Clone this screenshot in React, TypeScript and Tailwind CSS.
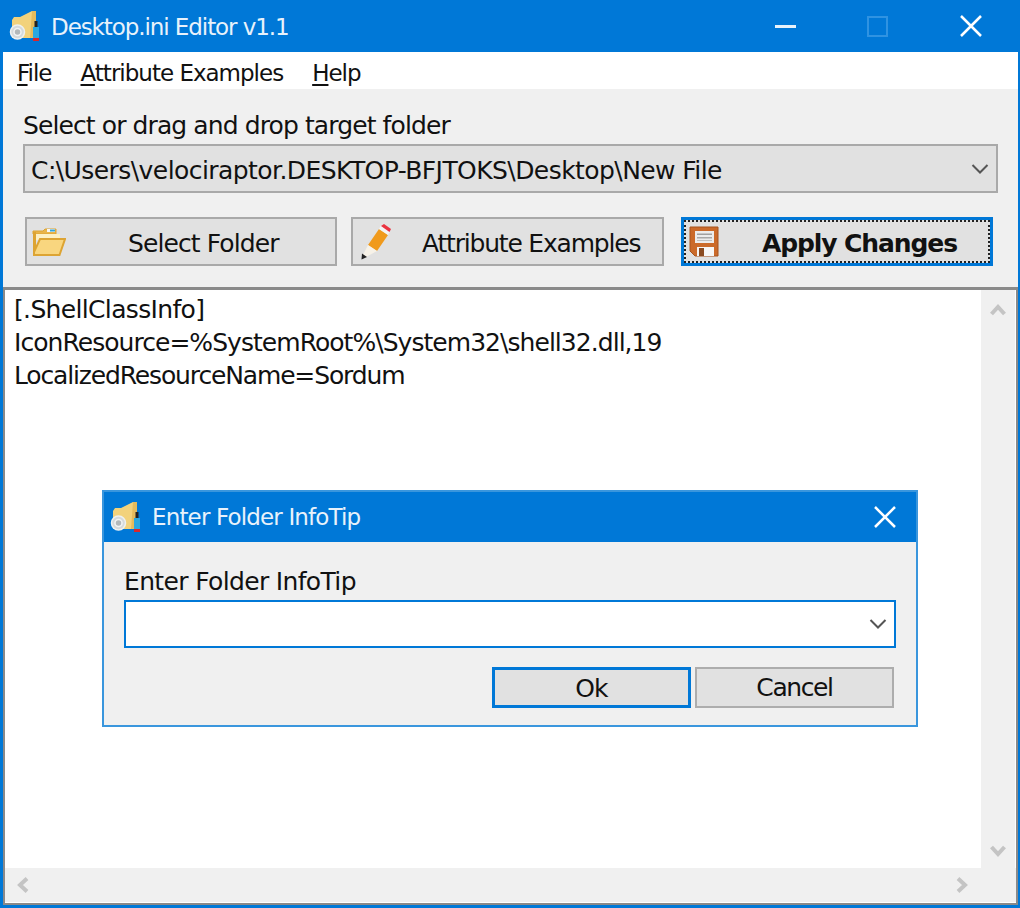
const font = "[font-family:'DejaVu_Sans',sans-serif]";

function AppIcon() {
  return (
    <svg width="30" height="32" viewBox="0 0 30 32">
      <path d="M3 10 L5 7 L11 7 L23 1 L27 1 L27 27 L23 28 L3 28 Z" fill="#f2d27c" />
      <path d="M23 1 L27 1 L27 27 L21 28 Z" fill="#e4bb5c" />
      <circle cx="8.500" cy="22" r="7" fill="#d5dadc" stroke="#eef1f1" strokeWidth="1.500" />
      <circle cx="8.500" cy="22" r="3.500" fill="#b3b8ba" stroke="#f2f3f3" strokeWidth="1.500" />
      <rect x="24" y="17" width="6" height="11" fill="#2aa8e0" />
      <rect x="25.500" y="11" width="3" height="6" fill="#222" />
      <rect x="24" y="28" width="6" height="3" fill="#d8262c" />
    </svg>
  );
}

function FolderIcon() {
  return (
    <svg width="34" height="28" viewBox="0 0 34 28">
      <path d="M1 3 H11 L13 1 H24 V6 H1 Z" fill="#e9b44a" stroke="#dda433" />
      <rect x="15" y="1" width="8" height="3" fill="#f5f5f5" />
      <rect x="18" y="1.500" width="5" height="2" fill="#35a7dc" />
      <path d="M1 4 H4 V27 H1 Z" fill="#dda433" />
      <path d="M4 6 H28 V12 H4 Z" fill="#fdf0c4" />
      <path d="M8 11 H33 L27.500 27 H2 V24 Z" fill="#f9d67f" stroke="#dda433" strokeWidth="2" />
    </svg>
  );
}

function PencilIcon() {
  return (
    <svg width="32" height="36" viewBox="0 0 32 36">
      <path d="M8 21 L19 5 L28 11 L17 27 Z" fill="#f09a1c" />
      <path d="M19 5 L21 1.500 L30 7.500 L28 11 Z" fill="#f4f4f4" />
      <path d="M21 2 L24 0 L31 5 L29.500 8 Z" fill="#ea3340" />
      <path d="M8 21 L17 27 L6 33 L3 31 Z" fill="#f7f2e8" />
      <path d="M2 29.500 L7 33 L1.500 35.500 Z" fill="#222" />
    </svg>
  );
}

function SaveIcon() {
  return (
    <svg width="30" height="31" viewBox="0 0 30 31">
      <path d="M1 1 H29 V30 H6 L1 25 Z" fill="#cb6a2a" stroke="#a5531f" />
      <rect x="6" y="5" width="19" height="12" fill="#ececec" />
      <rect x="8" y="7.500" width="15" height="1.500" fill="#a0a0a0" />
      <rect x="8" y="11" width="15" height="1.500" fill="#a8a8a8" />
      <rect x="8" y="14" width="15" height="1" fill="#c0c0c0" />
      <rect x="8" y="21" width="17" height="9" fill="#f6f6f6" />
      <rect x="10" y="22" width="5" height="8" fill="#8a4a20" />
    </svg>
  );
}

function CloseGlyph({ size }: { size: number }) {
  return (
    <svg width={size} height={size} viewBox="0 0 22 22" stroke="#fff" strokeWidth="2.500" fill="none">
      <path d="M1 1 L21 21 M21 1 L1 21" />
    </svg>
  );
}

function ComboChevron() {
  return (
    <svg width="18" height="12" viewBox="0 0 18 12" fill="none" stroke="#555" strokeWidth="2">
      <path d="M1.500 2 L9 9.500 L16.500 2" />
    </svg>
  );
}

function ScrollChevron({ rotate }: { rotate: string }) {
  return (
    <svg width="16" height="14" viewBox="0 0 16 14" fill="none" stroke="#c4c4c4" strokeWidth="4" className={rotate}>
      <path d="M1.500 11 L8 4 L14.500 11" />
    </svg>
  );
}

function Mnemonic({ first, rest }: { first: string; rest: string }) {
  return (
    <span>
      <span className="underline underline-offset-[3px] decoration-2">{first}</span>
      {rest}
    </span>
  );
}

function ToolButton({ icon, label, className, iconClass, labelClass }: { icon: React.ReactNode; label: string; className: string; iconClass: string; labelClass: string }) {
  return (
    <button className={`h-[49px] flex items-center bg-[#e1e1e1] text-[25px] text-[#111] ${className}`}>
      <span className={`flex items-center ${iconClass}`}>{icon}</span>
      <span className={`pt-[4px] ${labelClass}`}>{label}</span>
    </button>
  );
}

export default function App() {
  return (
    <div className={`relative w-[1020px] h-[908px] flex flex-col overflow-hidden bg-[#0078d7] tracking-[-0.9px] ${font}`}>
      {/* Title bar */}
      <div className="h-[52px] shrink-0 flex items-center text-white">
        <div className="ml-[9px] w-[30px] flex"><AppIcon /></div>
        <span className="ml-[12px] pt-[2px] text-[23px] tracking-[-1.08px] text-[#e8f2fb]">Desktop.ini Editor v1.1</span>
        <div className="ml-auto flex items-center">
          <div className="w-[21px] h-[3px] bg-[#e8f2fb] mr-[71px]" />
          <div className="w-[21px] h-[21px] border-2 border-[#2f93e2] mr-[72px]" />
          <div className="mr-[38px] flex"><CloseGlyph size={22} /></div>
        </div>
      </div>

      <div className="flex-1 min-h-0 ml-[3px] mr-[2px] mb-[3px] flex flex-col">
        {/* Menu */}
        <div className="h-[37px] shrink-0 bg-white flex items-center text-[23px] tracking-[-1px] text-[#111] pl-[14px] pt-[5px] gap-[29px]">
          <Mnemonic first="F" rest="ile" />
          <Mnemonic first="A" rest="ttribute Examples" />
          <Mnemonic first="H" rest="elp" />
        </div>

        {/* Folder panel */}
        <div className="h-[198px] shrink-0 bg-[#f0f0f0] flex flex-col pl-[20px] pr-[20px]">
          <div className="mt-[21px] h-[32px] text-[25px] leading-[32px] text-[#111]">Select or drag and drop target folder</div>
          <div className="mt-[2px] h-[49px] flex items-center justify-between bg-[#e1e1e1] border-[2px] border-[#a9a9a9] pl-[6px] pr-[7px] text-[25px] text-[#111]">
            <span className="pt-[4px] tracking-[-0.57px]">C:\Users\velociraptor.DESKTOP-BFJTOKS\Desktop\New File</span>
            <ComboChevron />
          </div>
          <div className="mt-[24px] flex">
            <ToolButton
              icon={<FolderIcon />}
              label="Select Folder"
              className="ml-[2px] w-[312px] border-[2px] border-[#a9a9a9]"
              iconClass="ml-[5px] w-[96px]"
              labelClass=""
            />
            <ToolButton
              icon={<PencilIcon />}
              label="Attribute Examples"
              className="ml-[14px] w-[313px] border-[2px] border-[#a9a9a9]"
              iconClass="ml-[7px] w-[62px]"
              labelClass="tracking-[-1.2px]"
            />
            <button className="ml-[17px] w-[312px] h-[49px] border-[3px] border-[#0078d7] bg-[#e1e1e1]">
              <span className="h-full flex items-center border-2 border-dotted border-[#222] text-[25px] font-bold text-[#111] tracking-[-1.1px]">
                <span className="ml-[3px] w-[73px] flex items-center"><SaveIcon /></span>
                <span className="pt-[4px]">Apply Changes</span>
              </span>
            </button>
          </div>
        </div>

        {/* Editor */}
        <div className="flex-1 min-h-0 flex flex-col bg-white border-t-[3px] border-x-[2px] border-b-[2px] border-t-[#8a8a8a] border-x-[#8a8a8a] border-b-[#8a8a8a]">
          <div className="flex-1 min-h-0 flex">
            <div className="flex-1 pl-[9px] pt-[3px] text-[25px] leading-[33px] text-[#111]">
              <div className="tracking-[-0.66px]">[.ShellClassInfo]</div>
              <div className="tracking-[-0.96px]">IconResource=%SystemRoot%\System32\shell32.dll,19</div>
              <div className="tracking-[-1.15px]">LocalizedResourceName=Sordum</div>
            </div>
            <div className="w-[34px] mr-[1px] bg-[#f0f0f0] flex flex-col items-center justify-between pt-[13px] pb-[10px]">
              <ScrollChevron rotate="" />
              <ScrollChevron rotate="rotate-180" />
            </div>
          </div>
          <div className="h-[34px] mb-[1px] shrink-0 flex items-center justify-between bg-[#f0f0f0] pl-[10px] pr-[46px]">
            <ScrollChevron rotate="-rotate-90" />
            <ScrollChevron rotate="rotate-90" />
          </div>
        </div>
      </div>

      {/* InfoTip dialog */}
      <div className="absolute left-[102px] top-[490px] w-[816px] h-[237px] flex flex-col border-2 border-t-0 border-[#3a96dd] bg-[#f0f0f0]">
        <div className="-mx-[2px] h-[52px] shrink-0 flex items-center bg-[#0078d7] border-x-2 border-t-2 border-[#3a96dd] border-b-0">
          <div className="ml-[6px] flex"><AppIcon /></div>
          <span className="ml-[12px] text-[23px] tracking-[-0.85px] text-[#e8f2fb]">Enter Folder InfoTip</span>
          <div className="ml-auto mr-[20px] flex"><CloseGlyph size={22} /></div>
        </div>
        <div className="flex flex-col pl-[20px] pr-[20px]">
          <div className="mt-[24px] h-[32px] leading-[32px] text-[25px] tracking-[-0.65px] text-[#111]">Enter Folder InfoTip</div>
          <div className="h-[48px] mt-[2px] flex items-center justify-end bg-white border-[2px] border-[#0078d7] pr-[7px]">
            <ComboChevron />
          </div>
          <div className="mt-[19px] flex justify-end pr-[2px] gap-[4px]">
            <button className="w-[199px] h-[41px] bg-[#e1e1e1] border-[3px] border-[#0078d7] text-[25px] text-[#111]">Ok</button>
            <button className="w-[199px] h-[41px] bg-[#e1e1e1] border-[2px] border-[#adadad] text-[25px] tracking-[-1.4px] text-[#111]">Cancel</button>
          </div>
        </div>
      </div>
    </div>
  );
}
